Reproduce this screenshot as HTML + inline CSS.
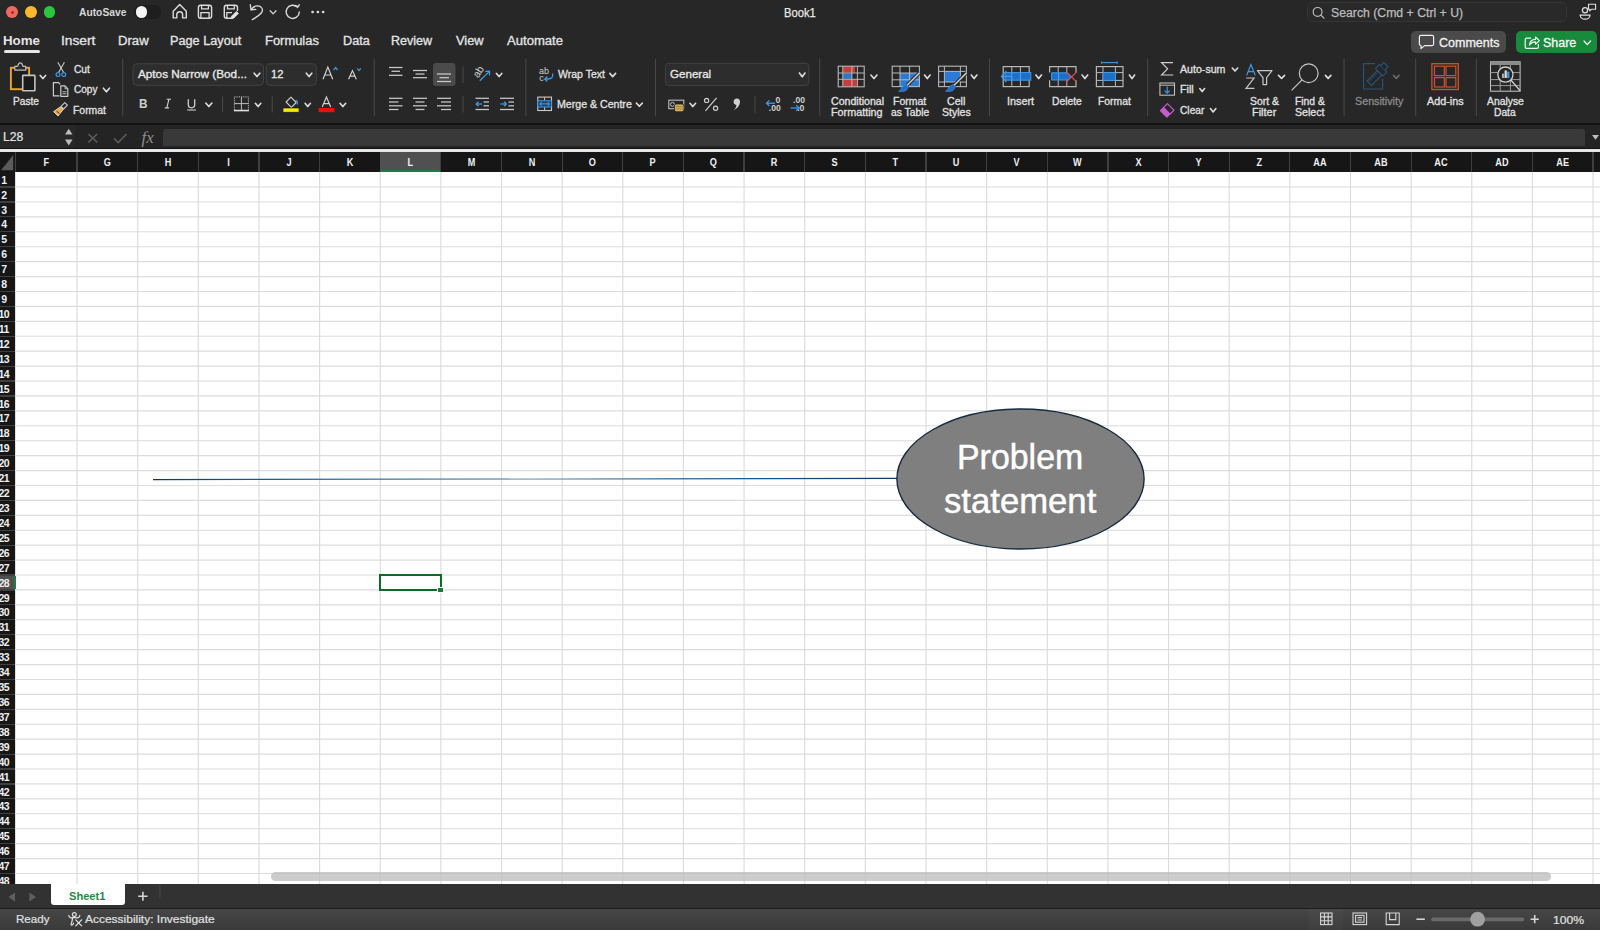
<!DOCTYPE html><html><head><meta charset="utf-8"><style>
*{margin:0;padding:0;box-sizing:border-box}
html,body{width:1600px;height:930px;overflow:hidden;background:#272727;font-family:"Liberation Sans",sans-serif;color:#e6e6e6}
.a{position:absolute}
.t{position:absolute;white-space:nowrap;line-height:1;transform-origin:0 0}
svg{position:absolute;overflow:visible}
</style></head><body>
<div class="a" style="left:0;top:0;width:1600px;height:124px;background:#272727"></div>
<div class="a" style="left:6.1px;top:6.1px;width:11.8px;height:11.8px;border-radius:50%;background:#ee6a5f"></div>
<div class="a" style="left:24.9px;top:6.1px;width:11.8px;height:11.8px;border-radius:50%;background:#f8b82e"></div>
<div class="a" style="left:43.6px;top:6.1px;width:11.8px;height:11.8px;border-radius:50%;background:#2bc640"></div>
<div class="a" style="left:10.5px;top:10.6px;width:3px;height:3px;border-radius:50%;background:#9a2d25"></div>
<div class="a" style="left:134px;top:5px;width:27px;height:14px;border-radius:7px;background:#1e1e1e"></div>
<div class="a" style="left:135.6px;top:6.2px;width:11.8px;height:11.8px;border-radius:50%;background:#f4f4f4"></div>
<div class="a" style="left:1306.8px;top:2.3px;width:260.4px;height:20.2px;border-radius:5px;background:#292929;border:1px solid #353535"></div>
<div class="a" style="left:4.3px;top:50.2px;width:36px;height:2.8px;border-radius:1.5px;background:#e6e6e6"></div>
<div class="a" style="left:1410.7px;top:31px;width:95.7px;height:21.5px;border-radius:5px;background:#4a4a4a"></div>
<div class="a" style="left:1516.1px;top:30.6px;width:81.2px;height:22.3px;border-radius:5px;background:#188a3c"></div>
<svg style="left:0;top:0" width="1600" height="125"><path d="M173.2,11.2 L179.7,4.6 L186.3,11.2 V17.9 H182.6 V14.6 A2.9,2.9 0 0 0 176.8,14.6 V17.9 H173.2 Z" fill="none" stroke="#dcdcdc" stroke-width="1.4" stroke-linejoin="round"/>
<rect x="198.4" y="5.2" width="13.2" height="13" rx="2.2" fill="none" stroke="#dcdcdc" stroke-width="1.4"/>
<path d="M201.6,5.5 V8.8 H208.4 V5.5" fill="none" stroke="#dcdcdc" stroke-width="1.3"/>
<path d="M200.9,18 V12.6 H209.1 V18" fill="none" stroke="#dcdcdc" stroke-width="1.3"/>
<path d="M232.5,18.2 H226.5 A2.2,2.2 0 0 1 224.3,16 V7.4 A2.2,2.2 0 0 1 226.5,5.2 H235.3 A2.2,2.2 0 0 1 237.5,7.4 V11" fill="none" stroke="#dcdcdc" stroke-width="1.4"/>
<path d="M227.5,5.5 V8.8 H234.3 V5.5" fill="none" stroke="#dcdcdc" stroke-width="1.3"/>
<path d="M226.8,18 V12.6 H232" fill="none" stroke="#dcdcdc" stroke-width="1.3"/>
<path d="M231.2,18.6 L231.6,16.2 L236.4,11.4 L238.4,13.4 L233.6,18.2 Z" fill="#e6e6e6" stroke="#e6e6e6" stroke-width="0.8" stroke-linejoin="round"/>
<path d="M251.2,9.6 C254,5.2 259.5,4.6 261.8,8 C263.8,11 261.5,14.5 252.3,19.6" fill="none" stroke="#dcdcdc" stroke-width="1.3" stroke-linecap="round"/>
<polyline points="250.3,4.6 251,9.9 255.8,9.4" fill="none" stroke="#dcdcdc" stroke-width="1.3" stroke-linecap="round" stroke-linejoin="round"/>
<polyline points="270.2,10.8 273.1,13.9 276,10.8" fill="none" stroke="#d0d0d0" stroke-width="1.3" stroke-linecap="round" stroke-linejoin="round"/>
<path d="M297.6,7.4 A6.6,6.6 0 1 0 299.3,12" fill="none" stroke="#dcdcdc" stroke-width="1.4" stroke-linecap="round"/>
<polyline points="294.2,5.6 298.6,6.4 299.2,4.6" fill="none" stroke="#dcdcdc" stroke-width="1.3" stroke-linecap="round" stroke-linejoin="round"/>
<circle cx="312.6" cy="12" r="1.35" fill="#dcdcdc"/>
<circle cx="317.9" cy="12" r="1.35" fill="#dcdcdc"/>
<circle cx="323.1" cy="12" r="1.35" fill="#dcdcdc"/>
<circle cx="1317.6" cy="11.9" r="4.4" fill="none" stroke="#bdbdbd" stroke-width="1.2"/>
<line x1="1320.8" y1="15.1" x2="1324" y2="18.1" stroke="#bdbdbd" stroke-width="1.3" stroke-linecap="round"/>
<circle cx="1585" cy="10.2" r="2.6" fill="none" stroke="#e0e0e0" stroke-width="1.2"/>
<path d="M1580.2,15.2 H1590 A4.9,4 0 0 1 1580.2,15.2 Z" fill="none" stroke="#e0e0e0" stroke-width="1.2"/>
<path d="M1588.5,4.3 H1595.6 V9.2 H1591.6 L1589.8,10.8 V9.2 H1588.5 Z" fill="#262626" stroke="#e0e0e0" stroke-width="1.1" stroke-linejoin="round"/>
<path d="M1421,35.3 H1432 A1.6,1.6 0 0 1 1433.6,36.9 V44 A1.6,1.6 0 0 1 1432,45.6 H1424.6 L1421,48.6 V45.6 H1421 A1.6,1.6 0 0 1 1419.4,44 V36.9 A1.6,1.6 0 0 1 1421,35.3 Z" fill="none" stroke="#f0f0f0" stroke-width="1.2" stroke-linejoin="round"/>
<path d="M1531,38.2 H1526.6 A1.4,1.4 0 0 0 1525.2,39.6 V47 A1.4,1.4 0 0 0 1526.6,48.4 H1537 A1.4,1.4 0 0 0 1538.4,47 V44" fill="none" stroke="#f4f4f4" stroke-width="1.2"/>
<path d="M1529.5,45 C1530,40.5 1532.5,39.4 1535.5,39.4 V37 L1539.4,40.6 L1535.5,44.2 V41.8 C1533,41.8 1531,42.6 1529.5,45 Z" fill="none" stroke="#f4f4f4" stroke-width="1.2" stroke-linejoin="round"/>
<polyline points="1584,41 1587.3,44.6 1590.6,41" fill="none" stroke="#f4f4f4" stroke-width="1.3" stroke-linecap="round" stroke-linejoin="round"/>
<rect x="122.2" y="58.7" width="1.1" height="57.3" fill="#464646"/>
<rect x="373.7" y="58.7" width="1.1" height="57.3" fill="#464646"/>
<rect x="525.3" y="58.7" width="1.1" height="57.3" fill="#464646"/>
<rect x="654.9" y="58.7" width="1.1" height="57.3" fill="#464646"/>
<rect x="819.2" y="58.7" width="1.1" height="57.3" fill="#464646"/>
<rect x="988.9" y="58.7" width="1.1" height="57.3" fill="#464646"/>
<rect x="1147.1" y="58.7" width="1.1" height="57.3" fill="#464646"/>
<rect x="1343.5" y="58.7" width="1.1" height="57.3" fill="#464646"/>
<rect x="1415.1" y="58.7" width="1.1" height="57.3" fill="#464646"/>
<rect x="1475.8" y="58.7" width="1.1" height="57.3" fill="#464646"/>
<rect x="10.9" y="67.8" width="18.2" height="21.4" fill="#1e1e1e" stroke="#eea52f" stroke-width="1.9"/>
<path d="M14.8,70.2 V66.4 H17.6 C18.3,63.6 19.2,62.9 20.3,62.9 C21.4,62.9 22.3,63.6 23,66.4 H25.8 V70.2 Z" fill="#2a2a2a" stroke="#bdbdbd" stroke-width="1.2" stroke-linejoin="round"/>
<rect x="22.7" y="75.4" width="12.2" height="15.4" fill="#1a1a1a" stroke="#c3c3c3" stroke-width="1.6" rx="0.6"/>
<polyline points="40.2,75.4 42.900000000000006,78.6 45.6,75.4" fill="none" stroke="#dedede" stroke-width="1.6" stroke-linecap="round" stroke-linejoin="round"/>
<line x1="57.8" y1="62.2" x2="63.6" y2="72.6" stroke="#cbcbcb" stroke-width="1.1" stroke-linecap="butt"/>
<line x1="64.4" y1="62.2" x2="58.6" y2="72.6" stroke="#cbcbcb" stroke-width="1.1" stroke-linecap="butt"/>
<circle cx="58" cy="74.6" r="1.9" fill="none" stroke="#3d9be9" stroke-width="1.2"/>
<circle cx="63.8" cy="74.6" r="1.9" fill="none" stroke="#3d9be9" stroke-width="1.2"/>
<path d="M59.5,95.8 H53.4 V82.6 H58.5 L60.2,84.3" fill="none" stroke="#cbcbcb" stroke-width="1.2"/>
<path d="M60.8,85.8 H65 L67.8,88.6 V96.3 H60.8 Z" fill="#262626" stroke="#cbcbcb" stroke-width="1.2" stroke-linejoin="round"/>
<path d="M65,86 V88.8 H67.6" fill="none" stroke="#cbcbcb" stroke-width="0.9"/>
<line x1="62.4" y1="91.8" x2="66.4" y2="91.8" stroke="#cbcbcb" stroke-width="0.9" stroke-linecap="butt"/>
<line x1="62.4" y1="93.8" x2="66.4" y2="93.8" stroke="#cbcbcb" stroke-width="0.9" stroke-linecap="butt"/>
<polyline points="103.4,88.2 106.4,91.8 109.4,88.2" fill="none" stroke="#dedede" stroke-width="1.6" stroke-linecap="round" stroke-linejoin="round"/>
<path d="M64.8,102.6 L67.4,105.2 L63.6,109 L61,106.4 Z" fill="#262626" stroke="#cbcbcb" stroke-width="1.1" stroke-linejoin="round"/>
<path d="M60.6,106.8 L63.2,109.4 L58,116 L53.6,111.6 Z" fill="#eaa93a" stroke="#d9d9d9" stroke-width="1" stroke-linejoin="round"/>
<path d="M56.5,111 L59.5,113.5" stroke="#262626" stroke-width="0.9"/>
<rect x="133" y="63.8" width="130.5" height="21.5" rx="4" fill="#2d2d2d" stroke="#434343" stroke-width="1"/>
<polyline points="254.2,73.2 257.0,76.6 259.8,73.2" fill="none" stroke="#dedede" stroke-width="1.6" stroke-linecap="round" stroke-linejoin="round"/>
<rect x="266.3" y="63.8" width="50" height="21.5" rx="4" fill="#2d2d2d" stroke="#434343" stroke-width="1"/>
<polyline points="306.3,73.2 309.05,76.6 311.8,73.2" fill="none" stroke="#dedede" stroke-width="1.6" stroke-linecap="round" stroke-linejoin="round"/>
<path d="M323,79.2 L327.85,67 L332.7,79.2 M324.7,75 H331" fill="none" stroke="#d2d2d2" stroke-width="1.2"/>
<polyline points="333.6,70.2 335.6,67.6 337.6,70.2" fill="none" stroke="#3d9be9" stroke-width="1.2"/>
<path d="M348.6,79.2 L352.45,70.6 L356.3,79.2 M349.9,76.2 H355" fill="none" stroke="#d2d2d2" stroke-width="1.2"/>
<polyline points="357.2,68.3 359,70.6 360.8,68.3" fill="none" stroke="#3d9be9" stroke-width="1.2"/>
<path d="M166.6,99.3 H171 M168.9,99.3 L166.8,107.9 M164.8,107.9 H169.1" fill="none" stroke="#cfcfcf" stroke-width="1.1"/>
<path d="M188.3,99.2 V104.6 A3.2,3.2 0 0 0 194.7,104.6 V99.2" fill="none" stroke="#cfcfcf" stroke-width="1.3"/>
<line x1="187.2" y1="110" x2="196" y2="110" stroke="#cfcfcf" stroke-width="1.1" stroke-linecap="butt"/>
<polyline points="205.8,103 208.85000000000002,106.6 211.9,103" fill="none" stroke="#dedede" stroke-width="1.6" stroke-linecap="round" stroke-linejoin="round"/>
<rect x="222.0" y="96.4" width="1.1" height="15.899999999999991" fill="#464646"/>
<rect x="234.4" y="96.9" width="14" height="13.4" fill="none" stroke="#bdbdbd" stroke-width="1" stroke-dasharray="1.2,1"/>
<line x1="241.4" y1="97" x2="241.4" y2="110" stroke="#bdbdbd" stroke-width="1" stroke-linecap="butt"/>
<line x1="234.4" y1="103.6" x2="248.4" y2="103.6" stroke="#bdbdbd" stroke-width="1" stroke-linecap="butt"/>
<line x1="233.9" y1="110.6" x2="248.9" y2="110.6" stroke="#e0e0e0" stroke-width="1.5" stroke-linecap="butt"/>
<polyline points="255.4,103.3 258.1,106.6 260.8,103.3" fill="none" stroke="#dedede" stroke-width="1.6" stroke-linecap="round" stroke-linejoin="round"/>
<rect x="271.7" y="96.5" width="1.1" height="16.0" fill="#464646"/>
<path d="M286.1,102 L290.9,97.2 L296.2,102.5 L291.4,107.3 Z" fill="none" stroke="#cfcfcf" stroke-width="1.1" stroke-linejoin="round"/>
<path d="M295.5,101 C296.8,99.8 297.6,101.2 297.3,104.5" fill="none" stroke="#3d9be9" stroke-width="1.2"/>
<rect x="283" y="108" width="16" height="4.2" fill="#f5ea00" stroke="#101035" stroke-width="0.6"/>
<polyline points="305.1,103.3 307.75,106.6 310.4,103.3" fill="none" stroke="#dedede" stroke-width="1.6" stroke-linecap="round" stroke-linejoin="round"/>
<path d="M322.2,107 L326.45,97 L330.7,107 M323.6,103.6 H329.3" fill="none" stroke="#d2d2d2" stroke-width="1.2"/>
<rect x="318.6" y="108" width="15.8" height="4.2" fill="#e8120c"/>
<polyline points="340,103.3 342.85,106.6 345.7,103.3" fill="none" stroke="#dedede" stroke-width="1.6" stroke-linecap="round" stroke-linejoin="round"/>
<line x1="389" y1="67.5" x2="402.5" y2="67.5" stroke="#c9c9c9" stroke-width="1.25" stroke-linecap="butt"/>
<line x1="391.5" y1="71.3" x2="400" y2="71.3" stroke="#c9c9c9" stroke-width="1.25" stroke-linecap="butt"/>
<line x1="389" y1="75.3" x2="402.5" y2="75.3" stroke="#c9c9c9" stroke-width="1.25" stroke-linecap="butt"/>
<line x1="413" y1="70.5" x2="427" y2="70.5" stroke="#c9c9c9" stroke-width="1.25" stroke-linecap="butt"/>
<line x1="415.5" y1="74" x2="424.5" y2="74" stroke="#c9c9c9" stroke-width="1.25" stroke-linecap="butt"/>
<line x1="413" y1="77.7" x2="427" y2="77.7" stroke="#c9c9c9" stroke-width="1.25" stroke-linecap="butt"/>
<rect x="433" y="63" width="22.5" height="23" rx="3" fill="#4b4b4b"/>
<line x1="437" y1="74" x2="451" y2="74" stroke="#c9c9c9" stroke-width="1.25" stroke-linecap="butt"/>
<line x1="439.5" y1="77.7" x2="449" y2="77.7" stroke="#c9c9c9" stroke-width="1.25" stroke-linecap="butt"/>
<line x1="437" y1="81.5" x2="451" y2="81.5" stroke="#c9c9c9" stroke-width="1.25" stroke-linecap="butt"/>
<rect x="462.5" y="66.5" width="1.1" height="16.5" fill="#464646"/>
<rect x="462.5" y="96" width="1.1" height="16.5" fill="#464646"/>
<text x="0" y="0" transform="translate(478.2,78.6) rotate(-58)" font-family="Liberation Sans" font-size="10.5" fill="#cfcfcf">ab</text>
<line x1="479.8" y1="80.8" x2="489.4" y2="71.4" stroke="#3d9be9" stroke-width="1.2" stroke-linecap="butt"/>
<polyline points="485.2,71.3 489.6,71.2 489.5,75.6" fill="none" stroke="#3d9be9" stroke-width="1.2"/>
<polyline points="496.4,73.4 499.1,76.6 501.8,73.4" fill="none" stroke="#dedede" stroke-width="1.6" stroke-linecap="round" stroke-linejoin="round"/>
<line x1="389" y1="98.3" x2="402.5" y2="98.3" stroke="#c9c9c9" stroke-width="1.25" stroke-linecap="butt"/>
<line x1="389" y1="102" x2="398.5" y2="102" stroke="#c9c9c9" stroke-width="1.25" stroke-linecap="butt"/>
<line x1="389" y1="105.8" x2="402.5" y2="105.8" stroke="#c9c9c9" stroke-width="1.25" stroke-linecap="butt"/>
<line x1="389" y1="109.5" x2="398.5" y2="109.5" stroke="#c9c9c9" stroke-width="1.25" stroke-linecap="butt"/>
<line x1="413" y1="98.3" x2="427" y2="98.3" stroke="#c9c9c9" stroke-width="1.25" stroke-linecap="butt"/>
<line x1="415.5" y1="102" x2="424.5" y2="102" stroke="#c9c9c9" stroke-width="1.25" stroke-linecap="butt"/>
<line x1="413" y1="105.8" x2="427" y2="105.8" stroke="#c9c9c9" stroke-width="1.25" stroke-linecap="butt"/>
<line x1="415.5" y1="109.5" x2="424.5" y2="109.5" stroke="#c9c9c9" stroke-width="1.25" stroke-linecap="butt"/>
<line x1="437" y1="98.3" x2="451" y2="98.3" stroke="#c9c9c9" stroke-width="1.25" stroke-linecap="butt"/>
<line x1="441" y1="102" x2="451" y2="102" stroke="#c9c9c9" stroke-width="1.25" stroke-linecap="butt"/>
<line x1="437" y1="105.8" x2="451" y2="105.8" stroke="#c9c9c9" stroke-width="1.25" stroke-linecap="butt"/>
<line x1="441" y1="109.5" x2="451" y2="109.5" stroke="#c9c9c9" stroke-width="1.25" stroke-linecap="butt"/>
<line x1="475.5" y1="98.3" x2="489" y2="98.3" stroke="#c9c9c9" stroke-width="1.25" stroke-linecap="butt"/>
<line x1="483.5" y1="102" x2="489" y2="102" stroke="#c9c9c9" stroke-width="1.25" stroke-linecap="butt"/>
<line x1="483.5" y1="105.8" x2="489" y2="105.8" stroke="#c9c9c9" stroke-width="1.25" stroke-linecap="butt"/>
<line x1="475.5" y1="109.5" x2="489" y2="109.5" stroke="#c9c9c9" stroke-width="1.25" stroke-linecap="butt"/>
<line x1="476.5" y1="104" x2="482" y2="104" stroke="#3d9be9" stroke-width="1.3" stroke-linecap="butt"/>
<polyline points="478.5,101.8 476.2,104 478.5,106.2" fill="none" stroke="#3d9be9" stroke-width="1.3"/>
<line x1="500" y1="98.3" x2="514" y2="98.3" stroke="#c9c9c9" stroke-width="1.25" stroke-linecap="butt"/>
<line x1="508.5" y1="102" x2="514" y2="102" stroke="#c9c9c9" stroke-width="1.25" stroke-linecap="butt"/>
<line x1="508.5" y1="105.8" x2="514" y2="105.8" stroke="#c9c9c9" stroke-width="1.25" stroke-linecap="butt"/>
<line x1="500" y1="109.5" x2="514" y2="109.5" stroke="#c9c9c9" stroke-width="1.25" stroke-linecap="butt"/>
<line x1="500.5" y1="104" x2="506" y2="104" stroke="#3d9be9" stroke-width="1.3" stroke-linecap="butt"/>
<polyline points="504,101.8 506.3,104 504,106.2" fill="none" stroke="#3d9be9" stroke-width="1.3"/>
<text x="539" y="73.6" font-family="Liberation Sans" font-size="9" fill="#cfcfcf">ab</text>
<text x="539.3" y="81.4" font-family="Liberation Sans" font-size="9" fill="#cfcfcf">c</text>
<path d="M552.6,73.5 C553.4,77.6 551.2,79 548,79 H545" fill="none" stroke="#3d9be9" stroke-width="1.3"/>
<polyline points="547.4,76.6 544.8,79 547.4,81.4" fill="none" stroke="#3d9be9" stroke-width="1.3"/>
<polyline points="609.8,73.4 612.7,76.6 615.6,73.4" fill="none" stroke="#dedede" stroke-width="1.6" stroke-linecap="round" stroke-linejoin="round"/>
<rect x="537.8" y="97.1" width="13.7" height="13.4" fill="none" stroke="#cbcbcb" stroke-width="1.1"/>
<line x1="544.6" y1="97.2" x2="544.6" y2="100.6" stroke="#cbcbcb" stroke-width="1" stroke-linecap="butt"/>
<line x1="544.6" y1="107.2" x2="544.6" y2="110.4" stroke="#cbcbcb" stroke-width="1" stroke-linecap="butt"/>
<rect x="537.8" y="100.8" width="13.7" height="6.2" fill="#1e3d5c" stroke="#3d9be9" stroke-width="1.1"/>
<line x1="540" y1="103.9" x2="549.4" y2="103.9" stroke="#3d9be9" stroke-width="1.2" stroke-linecap="butt"/>
<polyline points="541.6,102.2 539.9,103.9 541.6,105.6" fill="none" stroke="#3d9be9" stroke-width="1.1"/>
<polyline points="547.8,102.2 549.5,103.9 547.8,105.6" fill="none" stroke="#3d9be9" stroke-width="1.1"/>
<polyline points="636.4,103.1 639.3499999999999,106.3 642.3,103.1" fill="none" stroke="#dedede" stroke-width="1.6" stroke-linecap="round" stroke-linejoin="round"/>
<rect x="665.4" y="63.3" width="143.5" height="22.3" rx="4" fill="#2d2d2d" stroke="#434343" stroke-width="1"/>
<polyline points="799.4,73 802.2,76.8 805,73" fill="none" stroke="#dedede" stroke-width="1.6" stroke-linecap="round" stroke-linejoin="round"/>
<rect x="668.8" y="100.2" width="15" height="8.5" fill="none" stroke="#bdbdbd" stroke-width="1.1"/>
<circle cx="672.5" cy="104.4" r="2" fill="none" stroke="#bdbdbd" stroke-width="1"/>
<rect x="674.4" y="104" width="9.6" height="7.8" rx="2" fill="#d6b060" stroke="#1c1c1c" stroke-width="0.8"/>
<path d="M675.5,106.6 H683 M675.5,109 H683" stroke="#7a6030" stroke-width="0.6"/>
<polyline points="690,103.3 692.8,106.6 695.6,103.3" fill="none" stroke="#dedede" stroke-width="1.6" stroke-linecap="round" stroke-linejoin="round"/>
<circle cx="706.6" cy="100.4" r="2.1" fill="none" stroke="#cfcfcf" stroke-width="1.2"/><circle cx="715.6" cy="108.3" r="2.1" fill="none" stroke="#cfcfcf" stroke-width="1.2"/>
<line x1="716.6" y1="97.8" x2="705.4" y2="110.8" stroke="#cfcfcf" stroke-width="1.2" stroke-linecap="butt"/>
<path d="M736.7,98.6 C739.3,98.6 740.3,100.6 740,102.6 C739.6,105.8 737.4,108.6 733.4,110.2 C735.6,108.4 736.4,106.8 736.3,104.9 C734.6,104.8 733.6,103.6 733.6,101.8 C733.6,99.9 735,98.6 736.7,98.6 Z" fill="#cfcfcf"/>
<rect x="754.4" y="96.4" width="1.1" height="16.5" fill="#464646"/>
<path d="M766.6,103.2 H775" stroke="#3d9be9" stroke-width="1.3"/><polyline points="769.4,100.4 766.5,103.2 769.4,106" fill="none" stroke="#3d9be9" stroke-width="1.3"/>
<text x="775.6" y="103.2" font-family="Liberation Sans" font-weight="bold" font-size="8.6" fill="#d0d0d0">0</text>
<text x="768.8" y="111" font-family="Liberation Sans" font-weight="bold" font-size="8.6" fill="#d0d0d0">.00</text>
<text x="793" y="103.2" font-family="Liberation Sans" font-weight="bold" font-size="8.6" fill="#d0d0d0">.00</text>
<path d="M790.6,108 H799" stroke="#3d9be9" stroke-width="1.3"/><polyline points="796.2,105.2 799.1,108 796.2,110.8" fill="none" stroke="#3d9be9" stroke-width="1.3"/>
<text x="797.2" y="111" font-family="Liberation Sans" font-weight="bold" font-size="8.6" fill="#d0d0d0">.0</text>
<rect x="842.8" y="66.3" width="12.4" height="6.3" fill="#c83c3c"/>
<rect x="842.8" y="73.5" width="9.2" height="5.4" fill="#2a78cc"/>
<rect x="842.8" y="79.6" width="14" height="7" fill="#c83c3c"/>
<rect x="838.2" y="66.2" width="26" height="20.6" fill="none" stroke="#b8b8b8" stroke-width="1.1"/>
<line x1="842.8" y1="66.2" x2="842.8" y2="86.8" stroke="#b8b8b8" stroke-width="1" stroke-linecap="butt"/>
<line x1="851.9" y1="66.2" x2="851.9" y2="86.8" stroke="#b8b8b8" stroke-width="1" stroke-linecap="butt"/>
<line x1="857.4" y1="66.2" x2="857.4" y2="86.8" stroke="#b8b8b8" stroke-width="1" stroke-linecap="butt"/>
<line x1="838.2" y1="73" x2="864.2" y2="73" stroke="#b8b8b8" stroke-width="1" stroke-linecap="butt"/>
<line x1="838.2" y1="79.3" x2="864.2" y2="79.3" stroke="#b8b8b8" stroke-width="1" stroke-linecap="butt"/>
<polyline points="870.9,75 873.95,78.6 877,75" fill="none" stroke="#dedede" stroke-width="1.6" stroke-linecap="round" stroke-linejoin="round"/>
<rect x="900" y="73" width="19.4" height="13.6" fill="#2a7ad6"/>
<rect x="892.2" y="66.2" width="27.2" height="20.4" fill="none" stroke="#b8b8b8" stroke-width="1.1"/>
<line x1="900" y1="66.2" x2="900" y2="86.6" stroke="#b8b8b8" stroke-width="1" stroke-linecap="butt"/>
<line x1="909.6" y1="66.2" x2="909.6" y2="86.6" stroke="#b8b8b8" stroke-width="1" stroke-linecap="butt"/>
<line x1="892.2" y1="73" x2="919.4" y2="73" stroke="#b8b8b8" stroke-width="1" stroke-linecap="butt"/>
<line x1="892.2" y1="79.8" x2="919.4" y2="79.8" stroke="#b8b8b8" stroke-width="1" stroke-linecap="butt"/>
<path d="M919.8,72.6 L906.2,86.2" stroke="#262626" stroke-width="3.6"/><path d="M919.8,72.6 L906.6,85.8" stroke="#c8c8c8" stroke-width="1.6"/>
<path d="M906.2,84.6 C908.4,85.4 908.6,88.6 906,90.4 C903.8,91.8 900.6,91.6 898.6,91.2 C901.4,89.8 901.6,85.6 906.2,84.6 Z" fill="#1f6fc9" stroke="#3d9be9" stroke-width="0.6"/>
<polyline points="924.5,75 927.3,78.6 930.1,75" fill="none" stroke="#dedede" stroke-width="1.6" stroke-linecap="round" stroke-linejoin="round"/>
<rect x="944.6" y="71.6" width="15.6" height="10.4" fill="#2a7ad6"/>
<rect x="938.6" y="66.2" width="27.8" height="20.4" fill="none" stroke="#b8b8b8" stroke-width="1.1"/>
<line x1="944.4" y1="66.2" x2="944.4" y2="86.6" stroke="#b8b8b8" stroke-width="1" stroke-linecap="butt"/>
<line x1="960.4" y1="66.2" x2="960.4" y2="86.6" stroke="#b8b8b8" stroke-width="1" stroke-linecap="butt"/>
<line x1="938.6" y1="71.4" x2="966.4" y2="71.4" stroke="#b8b8b8" stroke-width="1" stroke-linecap="butt"/>
<line x1="938.6" y1="82" x2="966.4" y2="82" stroke="#b8b8b8" stroke-width="1" stroke-linecap="butt"/>
<path d="M966.8,72.6 L953.2,86.2" stroke="#262626" stroke-width="3.6"/><path d="M966.8,72.6 L953.6,85.8" stroke="#c8c8c8" stroke-width="1.6"/>
<path d="M953.2,84.6 C955.4,85.4 955.6,88.6 953,90.4 C950.8,91.8 947.6,91.6 945.6,91.2 C948.4,89.8 948.6,85.6 953.2,84.6 Z" fill="#1f6fc9" stroke="#3d9be9" stroke-width="0.6"/>
<polyline points="971.3,75 974.0999999999999,78.6 976.9,75" fill="none" stroke="#dedede" stroke-width="1.6" stroke-linecap="round" stroke-linejoin="round"/>
<rect x="1003.2" y="66.6" width="26" height="20" fill="none" stroke="#b8b8b8" stroke-width="1.2"/>
<line x1="1011.8" y1="66.6" x2="1011.8" y2="86.6" stroke="#b8b8b8" stroke-width="1" stroke-linecap="butt"/>
<line x1="1020.4" y1="66.6" x2="1020.4" y2="86.6" stroke="#b8b8b8" stroke-width="1" stroke-linecap="butt"/>
<rect x="1005" y="72.6" width="25.8" height="7.6" fill="#1f6fc9" stroke="#3d9be9" stroke-width="1"/>
<line x1="1011.8" y1="72.6" x2="1011.8" y2="80.2" stroke="#5aaaf0" stroke-width="0.9" stroke-linecap="butt"/>
<line x1="1020.4" y1="72.6" x2="1020.4" y2="80.2" stroke="#5aaaf0" stroke-width="0.9" stroke-linecap="butt"/>
<path d="M1002,76.4 H1012" stroke="#3d9be9" stroke-width="1.2"/><polyline points="1006.4,70.8 1001.4,76.4 1006.4,82" fill="none" stroke="#3d9be9" stroke-width="1.2"/>
<polyline points="1035.9,75 1038.7,78.6 1041.5,75" fill="none" stroke="#dedede" stroke-width="1.6" stroke-linecap="round" stroke-linejoin="round"/>
<path d="M1049.6,72.6 V66.6 H1076 V72.6 M1049.6,80.2 V86.6 H1076 V80.2" fill="none" stroke="#b8b8b8" stroke-width="1.2"/>
<line x1="1058.2" y1="66.6" x2="1058.2" y2="72.6" stroke="#b8b8b8" stroke-width="1" stroke-linecap="butt"/>
<line x1="1058.2" y1="80.2" x2="1058.2" y2="86.6" stroke="#b8b8b8" stroke-width="1" stroke-linecap="butt"/>
<line x1="1066.8" y1="66.6" x2="1066.8" y2="72.6" stroke="#b8b8b8" stroke-width="1" stroke-linecap="butt"/>
<line x1="1066.8" y1="80.2" x2="1066.8" y2="86.6" stroke="#b8b8b8" stroke-width="1" stroke-linecap="butt"/>
<path d="M1051.6,72.8 H1067.6 L1071,76.4 L1067.6,80 H1051.6 Z" fill="#1f6fc9" stroke="#3d9be9" stroke-width="1"/>
<line x1="1058.6" y1="72.8" x2="1058.6" y2="80" stroke="#5aaaf0" stroke-width="0.9" stroke-linecap="butt"/>
<line x1="1066.2" y1="71.6" x2="1076.8" y2="82.2" stroke="#e05050" stroke-width="1.2" stroke-linecap="butt"/>
<line x1="1076.8" y1="71.6" x2="1066.2" y2="82.2" stroke="#e05050" stroke-width="1.2" stroke-linecap="butt"/>
<polyline points="1082.1,75 1084.9,78.6 1087.7,75" fill="none" stroke="#dedede" stroke-width="1.6" stroke-linecap="round" stroke-linejoin="round"/>
<rect x="1096.4" y="66.6" width="26.6" height="20" fill="none" stroke="#b8b8b8" stroke-width="1.2"/>
<line x1="1103" y1="66.6" x2="1103" y2="86.6" stroke="#b8b8b8" stroke-width="1" stroke-linecap="butt"/>
<line x1="1115.4" y1="66.6" x2="1115.4" y2="86.6" stroke="#b8b8b8" stroke-width="1" stroke-linecap="butt"/>
<line x1="1096.4" y1="72.6" x2="1123" y2="72.6" stroke="#b8b8b8" stroke-width="1" stroke-linecap="butt"/>
<line x1="1096.4" y1="80.4" x2="1123" y2="80.4" stroke="#b8b8b8" stroke-width="1" stroke-linecap="butt"/>
<rect x="1103" y="72.6" width="12.4" height="7.8" fill="#1f6fc9" stroke="#3d9be9" stroke-width="0.9"/>
<line x1="1101.4" y1="62.6" x2="1117.2" y2="62.6" stroke="#3d9be9" stroke-width="1.1" stroke-linecap="butt"/>
<line x1="1101.4" y1="61.4" x2="1101.4" y2="63.8" stroke="#3d9be9" stroke-width="1" stroke-linecap="butt"/>
<line x1="1117.2" y1="61.4" x2="1117.2" y2="63.8" stroke="#3d9be9" stroke-width="1" stroke-linecap="butt"/>
<polyline points="1129.4,75 1132.0,78.6 1134.6,75" fill="none" stroke="#dedede" stroke-width="1.6" stroke-linecap="round" stroke-linejoin="round"/>
<path d="M1173,62.6 H1161.6 L1167.6,68.8 L1161.6,75 H1173.2" fill="none" stroke="#cfcfcf" stroke-width="1.2" stroke-linejoin="miter"/>
<polyline points="1232.3,68 1235.0,71 1237.7,68" fill="none" stroke="#dedede" stroke-width="1.6" stroke-linecap="round" stroke-linejoin="round"/>
<rect x="1159.9" y="83" width="14.6" height="12.2" fill="none" stroke="#bdbdbd" stroke-width="1.1"/>
<line x1="1159.9" y1="85.2" x2="1174.5" y2="85.2" stroke="#bdbdbd" stroke-width="1" stroke-linecap="butt"/>
<path d="M1167.2,86.6 V93" stroke="#3d9be9" stroke-width="1.2"/><polyline points="1164.6,90.6 1167.2,93.2 1169.8,90.6" fill="none" stroke="#3d9be9" stroke-width="1.2"/>
<polyline points="1199.8,88.6 1202.1999999999998,91.6 1204.6,88.6" fill="none" stroke="#dedede" stroke-width="1.6" stroke-linecap="round" stroke-linejoin="round"/>
<path d="M1167.4,103.6 L1174,110.2 L1166.8,117 L1160.4,110.6 Z" fill="none" stroke="#c45ccc" stroke-width="1.2" stroke-linejoin="round"/>
<path d="M1163.9,107.1 L1170.5,113.7 L1166.8,117 L1160.4,110.6 Z" fill="#c45ccc"/>
<polyline points="1210.4,108.6 1213.15,112 1215.9,108.6" fill="none" stroke="#dedede" stroke-width="1.6" stroke-linecap="round" stroke-linejoin="round"/>
<path d="M1246.6,75.4 L1250.95,64.6 L1255.3,75.4 M1248.1,71.6 H1253.8" fill="none" stroke="#3d9be9" stroke-width="1.2"/>
<path d="M1246.2,78 H1254 L1246,88.4 H1254.4" fill="none" stroke="#c8c8c8" stroke-width="1.2"/>
<path d="M1257.4,70.6 H1272 L1266.6,77.6 V84.6 H1263 V77.6 Z" fill="none" stroke="#c8c8c8" stroke-width="1.2" stroke-linejoin="round"/>
<polyline points="1278.5,75.4 1281.55,78.4 1284.6,75.4" fill="none" stroke="#dedede" stroke-width="1.6" stroke-linecap="round" stroke-linejoin="round"/>
<circle cx="1308.7" cy="73.2" r="9.4" fill="none" stroke="#c8c8c8" stroke-width="1.2"/>
<line x1="1302" y1="79.8" x2="1291.6" y2="90.3" stroke="#c8c8c8" stroke-width="1.2" stroke-linecap="butt"/>
<polyline points="1325.4,75.4 1328.15,78.4 1330.9,75.4" fill="none" stroke="#dedede" stroke-width="1.6" stroke-linecap="round" stroke-linejoin="round"/>
<path d="M1375,63.6 H1363.6 V89 H1382.6 V79" fill="none" stroke="#2a5274" stroke-width="1.2"/>
<path d="M1367,81 L1377.4,70.6 L1381.8,75 L1371.4,85.4 Z" fill="#262626" stroke="#2a5274" stroke-width="1.2"/>
<path d="M1369,81.4 L1377.6,72.8" stroke="#2a5274" stroke-width="1"/>
<path d="M1375.4,68.6 L1379.4,64.6 L1386.8,72 L1382.8,76 Z" fill="#262626" stroke="#2a5274" stroke-width="1.2"/>
<path d="M1380.6,65.8 L1383.8,62.6 L1388,66.8 L1384.8,70" fill="#262626" stroke="#2a5274" stroke-width="1.2"/>
<polyline points="1393.5,75.4 1396.25,78.4 1399,75.4" fill="none" stroke="#6a6a6a" stroke-width="1.6" stroke-linecap="round" stroke-linejoin="round"/>
<rect x="1431.9" y="63.7" width="26.4" height="25.8" fill="none" stroke="#d4502c" stroke-width="1.3"/>
<rect x="1434.5" y="66.2" width="9.8" height="9.4" fill="none" stroke="#d4502c" stroke-width="1.2"/>
<rect x="1446" y="66.2" width="9.8" height="9.4" fill="none" stroke="#d4502c" stroke-width="1.2"/>
<rect x="1434.5" y="77.6" width="9.8" height="9.4" fill="none" stroke="#d4502c" stroke-width="1.2"/>
<rect x="1446" y="77.6" width="9.8" height="9.4" fill="none" stroke="#d4502c" stroke-width="1.2"/>
<rect x="1490.5" y="61.8" width="29.6" height="29.4" fill="none" stroke="#bdbdbd" stroke-width="1.1"/>
<rect x="1490.5" y="61.8" width="29.6" height="3.2" fill="#8a8a8a"/>
<line x1="1500.2" y1="65" x2="1500.2" y2="91.2" stroke="#9a9a9a" stroke-width="1" stroke-linecap="butt"/>
<line x1="1510.4" y1="65" x2="1510.4" y2="91.2" stroke="#9a9a9a" stroke-width="1" stroke-linecap="butt"/>
<line x1="1490.5" y1="72.6" x2="1520.1" y2="72.6" stroke="#9a9a9a" stroke-width="1" stroke-linecap="butt"/>
<line x1="1490.5" y1="79.6" x2="1520.1" y2="79.6" stroke="#9a9a9a" stroke-width="1" stroke-linecap="butt"/>
<line x1="1490.5" y1="85.6" x2="1520.1" y2="85.6" stroke="#9a9a9a" stroke-width="1" stroke-linecap="butt"/>
<circle cx="1505.4" cy="74.6" r="7.6" fill="#262626" stroke="#cfcfcf" stroke-width="1.3"/>
<rect x="1502" y="73.6" width="2.2" height="4.4" fill="#aaaaaa"/><rect x="1504.6" y="70.4" width="2.2" height="7.6" fill="#dddddd"/><rect x="1507.2" y="71.6" width="2.2" height="6.4" fill="#3d9be9"/>
<line x1="1510.8" y1="80" x2="1520.2" y2="90.8" stroke="#cfcfcf" stroke-width="1.3" stroke-linecap="butt"/></svg>
<div class="a" style="left:0;top:123.3px;width:1600px;height:1.8px;background:#111"></div>
<div class="a" style="left:0;top:125px;width:1600px;height:25px;background:#242424"></div>
<div class="a" style="left:0;top:125px;width:75px;height:25px;background:#282828"></div>
<div class="a" style="left:162.5px;top:128.8px;width:1422px;height:17px;border-radius:3px 3px 0 0;background:#393939"></div><div class="a" style="left:0;top:148.1px;width:1600px;height:1px;background:#111"></div>
<svg style="left:0;top:0" width="1600" height="152">
<polygon points="65,134.4 68.75,128.8 72.5,134.4" fill="#bdbdbd"/>
<polygon points="65,139.4 68.75,145.6 72.5,139.4" fill="#bdbdbd"/>
<path d="M88.4,134 L97.2,142.4 M97.2,134 L88.4,142.4" stroke="#5c5c5c" stroke-width="1.5"/>
<polyline points="114,138.4 118.2,142.6 126.6,134" fill="none" stroke="#5c5c5c" stroke-width="1.5"/>
<polygon points="1592,135 1599,135 1595.5,139.7" fill="#bdbdbd"/>
</svg>
<div class="t" style="left:141.5px;top:128.6px;font-family:'Liberation Serif';font-style:italic;font-size:17px;color:#8e8e8e">fx</div>
<div class="a" style="left:0;top:149.1px;width:1600px;height:2.8px;background:#e6e6e6"></div>
<div class="a" style="left:0;top:151.8px;width:1600px;height:20px;background:#161616"></div>
<div class="t" style="left:16.40px;top:157px;width:60.64px;text-align:center;font-size:11px;font-weight:bold;color:#f0f0f0"><span style="display:inline-block;transform:scaleX(0.83)">F</span></div>
<div class="a" style="left:76.44px;top:152px;width:1.2px;height:20px;background:#3f3f3f"></div>
<div class="t" style="left:77.04px;top:157px;width:60.64px;text-align:center;font-size:11px;font-weight:bold;color:#f0f0f0"><span style="display:inline-block;transform:scaleX(0.83)">G</span></div>
<div class="a" style="left:137.08px;top:152px;width:1.2px;height:20px;background:#3f3f3f"></div>
<div class="t" style="left:137.68px;top:157px;width:60.64px;text-align:center;font-size:11px;font-weight:bold;color:#f0f0f0"><span style="display:inline-block;transform:scaleX(0.83)">H</span></div>
<div class="a" style="left:197.72px;top:152px;width:1.2px;height:20px;background:#3f3f3f"></div>
<div class="t" style="left:198.32px;top:157px;width:60.64px;text-align:center;font-size:11px;font-weight:bold;color:#f0f0f0"><span style="display:inline-block;transform:scaleX(0.83)">I</span></div>
<div class="a" style="left:258.36px;top:152px;width:1.2px;height:20px;background:#3f3f3f"></div>
<div class="t" style="left:258.96px;top:157px;width:60.64px;text-align:center;font-size:11px;font-weight:bold;color:#f0f0f0"><span style="display:inline-block;transform:scaleX(0.83)">J</span></div>
<div class="a" style="left:319.00px;top:152px;width:1.2px;height:20px;background:#3f3f3f"></div>
<div class="t" style="left:319.60px;top:157px;width:60.64px;text-align:center;font-size:11px;font-weight:bold;color:#f0f0f0"><span style="display:inline-block;transform:scaleX(0.83)">K</span></div>
<div class="a" style="left:379.64px;top:152px;width:1.2px;height:20px;background:#3f3f3f"></div>
<div class="a" style="left:380.24px;top:152px;width:60.64px;height:20px;background:#505050"></div>
<div class="a" style="left:380.24px;top:170.2px;width:60.64px;height:1.8px;background:#1e7d45"></div>
<div class="t" style="left:380.24px;top:157px;width:60.64px;text-align:center;font-size:11px;font-weight:bold;color:#f0f0f0"><span style="display:inline-block;transform:scaleX(0.83)">L</span></div>
<div class="a" style="left:440.28px;top:152px;width:1.2px;height:20px;background:#3f3f3f"></div>
<div class="t" style="left:440.88px;top:157px;width:60.64px;text-align:center;font-size:11px;font-weight:bold;color:#f0f0f0"><span style="display:inline-block;transform:scaleX(0.83)">M</span></div>
<div class="a" style="left:500.92px;top:152px;width:1.2px;height:20px;background:#3f3f3f"></div>
<div class="t" style="left:501.52px;top:157px;width:60.64px;text-align:center;font-size:11px;font-weight:bold;color:#f0f0f0"><span style="display:inline-block;transform:scaleX(0.83)">N</span></div>
<div class="a" style="left:561.56px;top:152px;width:1.2px;height:20px;background:#3f3f3f"></div>
<div class="t" style="left:562.16px;top:157px;width:60.64px;text-align:center;font-size:11px;font-weight:bold;color:#f0f0f0"><span style="display:inline-block;transform:scaleX(0.83)">O</span></div>
<div class="a" style="left:622.20px;top:152px;width:1.2px;height:20px;background:#3f3f3f"></div>
<div class="t" style="left:622.80px;top:157px;width:60.64px;text-align:center;font-size:11px;font-weight:bold;color:#f0f0f0"><span style="display:inline-block;transform:scaleX(0.83)">P</span></div>
<div class="a" style="left:682.84px;top:152px;width:1.2px;height:20px;background:#3f3f3f"></div>
<div class="t" style="left:683.44px;top:157px;width:60.64px;text-align:center;font-size:11px;font-weight:bold;color:#f0f0f0"><span style="display:inline-block;transform:scaleX(0.83)">Q</span></div>
<div class="a" style="left:743.48px;top:152px;width:1.2px;height:20px;background:#3f3f3f"></div>
<div class="t" style="left:744.08px;top:157px;width:60.64px;text-align:center;font-size:11px;font-weight:bold;color:#f0f0f0"><span style="display:inline-block;transform:scaleX(0.83)">R</span></div>
<div class="a" style="left:804.12px;top:152px;width:1.2px;height:20px;background:#3f3f3f"></div>
<div class="t" style="left:804.72px;top:157px;width:60.64px;text-align:center;font-size:11px;font-weight:bold;color:#f0f0f0"><span style="display:inline-block;transform:scaleX(0.83)">S</span></div>
<div class="a" style="left:864.76px;top:152px;width:1.2px;height:20px;background:#3f3f3f"></div>
<div class="t" style="left:865.36px;top:157px;width:60.64px;text-align:center;font-size:11px;font-weight:bold;color:#f0f0f0"><span style="display:inline-block;transform:scaleX(0.83)">T</span></div>
<div class="a" style="left:925.40px;top:152px;width:1.2px;height:20px;background:#3f3f3f"></div>
<div class="t" style="left:926.00px;top:157px;width:60.64px;text-align:center;font-size:11px;font-weight:bold;color:#f0f0f0"><span style="display:inline-block;transform:scaleX(0.83)">U</span></div>
<div class="a" style="left:986.04px;top:152px;width:1.2px;height:20px;background:#3f3f3f"></div>
<div class="t" style="left:986.64px;top:157px;width:60.64px;text-align:center;font-size:11px;font-weight:bold;color:#f0f0f0"><span style="display:inline-block;transform:scaleX(0.83)">V</span></div>
<div class="a" style="left:1046.68px;top:152px;width:1.2px;height:20px;background:#3f3f3f"></div>
<div class="t" style="left:1047.28px;top:157px;width:60.64px;text-align:center;font-size:11px;font-weight:bold;color:#f0f0f0"><span style="display:inline-block;transform:scaleX(0.83)">W</span></div>
<div class="a" style="left:1107.32px;top:152px;width:1.2px;height:20px;background:#3f3f3f"></div>
<div class="t" style="left:1107.92px;top:157px;width:60.64px;text-align:center;font-size:11px;font-weight:bold;color:#f0f0f0"><span style="display:inline-block;transform:scaleX(0.83)">X</span></div>
<div class="a" style="left:1167.96px;top:152px;width:1.2px;height:20px;background:#3f3f3f"></div>
<div class="t" style="left:1168.56px;top:157px;width:60.64px;text-align:center;font-size:11px;font-weight:bold;color:#f0f0f0"><span style="display:inline-block;transform:scaleX(0.83)">Y</span></div>
<div class="a" style="left:1228.60px;top:152px;width:1.2px;height:20px;background:#3f3f3f"></div>
<div class="t" style="left:1229.20px;top:157px;width:60.64px;text-align:center;font-size:11px;font-weight:bold;color:#f0f0f0"><span style="display:inline-block;transform:scaleX(0.83)">Z</span></div>
<div class="a" style="left:1289.24px;top:152px;width:1.2px;height:20px;background:#3f3f3f"></div>
<div class="t" style="left:1289.84px;top:157px;width:60.64px;text-align:center;font-size:11px;font-weight:bold;color:#f0f0f0"><span style="display:inline-block;transform:scaleX(0.83)">AA</span></div>
<div class="a" style="left:1349.88px;top:152px;width:1.2px;height:20px;background:#3f3f3f"></div>
<div class="t" style="left:1350.48px;top:157px;width:60.64px;text-align:center;font-size:11px;font-weight:bold;color:#f0f0f0"><span style="display:inline-block;transform:scaleX(0.83)">AB</span></div>
<div class="a" style="left:1410.52px;top:152px;width:1.2px;height:20px;background:#3f3f3f"></div>
<div class="t" style="left:1411.12px;top:157px;width:60.64px;text-align:center;font-size:11px;font-weight:bold;color:#f0f0f0"><span style="display:inline-block;transform:scaleX(0.83)">AC</span></div>
<div class="a" style="left:1471.16px;top:152px;width:1.2px;height:20px;background:#3f3f3f"></div>
<div class="t" style="left:1471.76px;top:157px;width:60.64px;text-align:center;font-size:11px;font-weight:bold;color:#f0f0f0"><span style="display:inline-block;transform:scaleX(0.83)">AD</span></div>
<div class="a" style="left:1531.80px;top:152px;width:1.2px;height:20px;background:#3f3f3f"></div>
<div class="t" style="left:1532.40px;top:157px;width:60.64px;text-align:center;font-size:11px;font-weight:bold;color:#f0f0f0"><span style="display:inline-block;transform:scaleX(0.83)">AE</span></div>
<div class="a" style="left:1592.44px;top:152px;width:1.2px;height:20px;background:#3f3f3f"></div>
<div class="t" style="left:1593.04px;top:157px;width:60.64px;text-align:center;font-size:11px;font-weight:bold;color:#f0f0f0"><span style="display:inline-block;transform:scaleX(0.83)">AF</span></div>
<div class="a" style="left:1653.08px;top:152px;width:1.2px;height:20px;background:#3f3f3f"></div>
<div class="a" style="left:14.9px;top:152px;width:1.2px;height:20px;background:#3f3f3f"></div>
<div class="a" style="left:0;top:172px;width:1600px;height:712px;background:#ffffff"></div>
<div class="a" style="left:0;top:172px;width:14.8px;height:712px;background:#161616"></div>
<div class="a" style="left:0;top:186.42px;width:14.8px;height:1.2px;background:#3f3f3f"></div>
<div class="t" style="left:-6.2px;top:174.70px;width:20px;text-align:center;font-size:10.5px;font-weight:bold;color:#f0f0f0;letter-spacing:-0.6px">1</div>
<div class="a" style="left:0;top:201.35px;width:14.8px;height:1.2px;background:#3f3f3f"></div>
<div class="t" style="left:-6.2px;top:189.62px;width:20px;text-align:center;font-size:10.5px;font-weight:bold;color:#f0f0f0;letter-spacing:-0.6px">2</div>
<div class="a" style="left:0;top:216.27px;width:14.8px;height:1.2px;background:#3f3f3f"></div>
<div class="t" style="left:-6.2px;top:204.55px;width:20px;text-align:center;font-size:10.5px;font-weight:bold;color:#f0f0f0;letter-spacing:-0.6px">3</div>
<div class="a" style="left:0;top:231.19px;width:14.8px;height:1.2px;background:#3f3f3f"></div>
<div class="t" style="left:-6.2px;top:219.47px;width:20px;text-align:center;font-size:10.5px;font-weight:bold;color:#f0f0f0;letter-spacing:-0.6px">4</div>
<div class="a" style="left:0;top:246.12px;width:14.8px;height:1.2px;background:#3f3f3f"></div>
<div class="t" style="left:-6.2px;top:234.39px;width:20px;text-align:center;font-size:10.5px;font-weight:bold;color:#f0f0f0;letter-spacing:-0.6px">5</div>
<div class="a" style="left:0;top:261.04px;width:14.8px;height:1.2px;background:#3f3f3f"></div>
<div class="t" style="left:-6.2px;top:249.31px;width:20px;text-align:center;font-size:10.5px;font-weight:bold;color:#f0f0f0;letter-spacing:-0.6px">6</div>
<div class="a" style="left:0;top:275.96px;width:14.8px;height:1.2px;background:#3f3f3f"></div>
<div class="t" style="left:-6.2px;top:264.24px;width:20px;text-align:center;font-size:10.5px;font-weight:bold;color:#f0f0f0;letter-spacing:-0.6px">7</div>
<div class="a" style="left:0;top:290.88px;width:14.8px;height:1.2px;background:#3f3f3f"></div>
<div class="t" style="left:-6.2px;top:279.16px;width:20px;text-align:center;font-size:10.5px;font-weight:bold;color:#f0f0f0;letter-spacing:-0.6px">8</div>
<div class="a" style="left:0;top:305.81px;width:14.8px;height:1.2px;background:#3f3f3f"></div>
<div class="t" style="left:-6.2px;top:294.08px;width:20px;text-align:center;font-size:10.5px;font-weight:bold;color:#f0f0f0;letter-spacing:-0.6px">9</div>
<div class="a" style="left:0;top:320.73px;width:14.8px;height:1.2px;background:#3f3f3f"></div>
<div class="t" style="left:-6.2px;top:309.01px;width:20px;text-align:center;font-size:10.5px;font-weight:bold;color:#f0f0f0;letter-spacing:-0.6px">10</div>
<div class="a" style="left:0;top:335.65px;width:14.8px;height:1.2px;background:#3f3f3f"></div>
<div class="t" style="left:-6.2px;top:323.93px;width:20px;text-align:center;font-size:10.5px;font-weight:bold;color:#f0f0f0;letter-spacing:-0.6px">11</div>
<div class="a" style="left:0;top:350.58px;width:14.8px;height:1.2px;background:#3f3f3f"></div>
<div class="t" style="left:-6.2px;top:338.85px;width:20px;text-align:center;font-size:10.5px;font-weight:bold;color:#f0f0f0;letter-spacing:-0.6px">12</div>
<div class="a" style="left:0;top:365.50px;width:14.8px;height:1.2px;background:#3f3f3f"></div>
<div class="t" style="left:-6.2px;top:353.78px;width:20px;text-align:center;font-size:10.5px;font-weight:bold;color:#f0f0f0;letter-spacing:-0.6px">13</div>
<div class="a" style="left:0;top:380.42px;width:14.8px;height:1.2px;background:#3f3f3f"></div>
<div class="t" style="left:-6.2px;top:368.70px;width:20px;text-align:center;font-size:10.5px;font-weight:bold;color:#f0f0f0;letter-spacing:-0.6px">14</div>
<div class="a" style="left:0;top:395.34px;width:14.8px;height:1.2px;background:#3f3f3f"></div>
<div class="t" style="left:-6.2px;top:383.62px;width:20px;text-align:center;font-size:10.5px;font-weight:bold;color:#f0f0f0;letter-spacing:-0.6px">15</div>
<div class="a" style="left:0;top:410.27px;width:14.8px;height:1.2px;background:#3f3f3f"></div>
<div class="t" style="left:-6.2px;top:398.55px;width:20px;text-align:center;font-size:10.5px;font-weight:bold;color:#f0f0f0;letter-spacing:-0.6px">16</div>
<div class="a" style="left:0;top:425.19px;width:14.8px;height:1.2px;background:#3f3f3f"></div>
<div class="t" style="left:-6.2px;top:413.47px;width:20px;text-align:center;font-size:10.5px;font-weight:bold;color:#f0f0f0;letter-spacing:-0.6px">17</div>
<div class="a" style="left:0;top:440.11px;width:14.8px;height:1.2px;background:#3f3f3f"></div>
<div class="t" style="left:-6.2px;top:428.39px;width:20px;text-align:center;font-size:10.5px;font-weight:bold;color:#f0f0f0;letter-spacing:-0.6px">18</div>
<div class="a" style="left:0;top:455.04px;width:14.8px;height:1.2px;background:#3f3f3f"></div>
<div class="t" style="left:-6.2px;top:443.31px;width:20px;text-align:center;font-size:10.5px;font-weight:bold;color:#f0f0f0;letter-spacing:-0.6px">19</div>
<div class="a" style="left:0;top:469.96px;width:14.8px;height:1.2px;background:#3f3f3f"></div>
<div class="t" style="left:-6.2px;top:458.24px;width:20px;text-align:center;font-size:10.5px;font-weight:bold;color:#f0f0f0;letter-spacing:-0.6px">20</div>
<div class="a" style="left:0;top:484.88px;width:14.8px;height:1.2px;background:#3f3f3f"></div>
<div class="t" style="left:-6.2px;top:473.16px;width:20px;text-align:center;font-size:10.5px;font-weight:bold;color:#f0f0f0;letter-spacing:-0.6px">21</div>
<div class="a" style="left:0;top:499.81px;width:14.8px;height:1.2px;background:#3f3f3f"></div>
<div class="t" style="left:-6.2px;top:488.08px;width:20px;text-align:center;font-size:10.5px;font-weight:bold;color:#f0f0f0;letter-spacing:-0.6px">22</div>
<div class="a" style="left:0;top:514.73px;width:14.8px;height:1.2px;background:#3f3f3f"></div>
<div class="t" style="left:-6.2px;top:503.01px;width:20px;text-align:center;font-size:10.5px;font-weight:bold;color:#f0f0f0;letter-spacing:-0.6px">23</div>
<div class="a" style="left:0;top:529.65px;width:14.8px;height:1.2px;background:#3f3f3f"></div>
<div class="t" style="left:-6.2px;top:517.93px;width:20px;text-align:center;font-size:10.5px;font-weight:bold;color:#f0f0f0;letter-spacing:-0.6px">24</div>
<div class="a" style="left:0;top:544.57px;width:14.8px;height:1.2px;background:#3f3f3f"></div>
<div class="t" style="left:-6.2px;top:532.85px;width:20px;text-align:center;font-size:10.5px;font-weight:bold;color:#f0f0f0;letter-spacing:-0.6px">25</div>
<div class="a" style="left:0;top:559.50px;width:14.8px;height:1.2px;background:#3f3f3f"></div>
<div class="t" style="left:-6.2px;top:547.77px;width:20px;text-align:center;font-size:10.5px;font-weight:bold;color:#f0f0f0;letter-spacing:-0.6px">26</div>
<div class="a" style="left:0;top:574.42px;width:14.8px;height:1.2px;background:#3f3f3f"></div>
<div class="t" style="left:-6.2px;top:562.70px;width:20px;text-align:center;font-size:10.5px;font-weight:bold;color:#f0f0f0;letter-spacing:-0.6px">27</div>
<div class="a" style="left:0;top:589.34px;width:14.8px;height:1.2px;background:#3f3f3f"></div>
<div class="a" style="left:0;top:575.62px;width:14.8px;height:13.72px;background:#505050"></div>
<div class="a" style="left:14px;top:575.62px;width:2px;height:13.72px;background:#1e7d45"></div>
<div class="t" style="left:-6.2px;top:577.62px;width:20px;text-align:center;font-size:10.5px;font-weight:bold;color:#f0f0f0;letter-spacing:-0.6px">28</div>
<div class="a" style="left:0;top:604.27px;width:14.8px;height:1.2px;background:#3f3f3f"></div>
<div class="t" style="left:-6.2px;top:592.54px;width:20px;text-align:center;font-size:10.5px;font-weight:bold;color:#f0f0f0;letter-spacing:-0.6px">29</div>
<div class="a" style="left:0;top:619.19px;width:14.8px;height:1.2px;background:#3f3f3f"></div>
<div class="t" style="left:-6.2px;top:607.47px;width:20px;text-align:center;font-size:10.5px;font-weight:bold;color:#f0f0f0;letter-spacing:-0.6px">30</div>
<div class="a" style="left:0;top:634.11px;width:14.8px;height:1.2px;background:#3f3f3f"></div>
<div class="t" style="left:-6.2px;top:622.39px;width:20px;text-align:center;font-size:10.5px;font-weight:bold;color:#f0f0f0;letter-spacing:-0.6px">31</div>
<div class="a" style="left:0;top:649.04px;width:14.8px;height:1.2px;background:#3f3f3f"></div>
<div class="t" style="left:-6.2px;top:637.31px;width:20px;text-align:center;font-size:10.5px;font-weight:bold;color:#f0f0f0;letter-spacing:-0.6px">32</div>
<div class="a" style="left:0;top:663.96px;width:14.8px;height:1.2px;background:#3f3f3f"></div>
<div class="t" style="left:-6.2px;top:652.24px;width:20px;text-align:center;font-size:10.5px;font-weight:bold;color:#f0f0f0;letter-spacing:-0.6px">33</div>
<div class="a" style="left:0;top:678.88px;width:14.8px;height:1.2px;background:#3f3f3f"></div>
<div class="t" style="left:-6.2px;top:667.16px;width:20px;text-align:center;font-size:10.5px;font-weight:bold;color:#f0f0f0;letter-spacing:-0.6px">34</div>
<div class="a" style="left:0;top:693.80px;width:14.8px;height:1.2px;background:#3f3f3f"></div>
<div class="t" style="left:-6.2px;top:682.08px;width:20px;text-align:center;font-size:10.5px;font-weight:bold;color:#f0f0f0;letter-spacing:-0.6px">35</div>
<div class="a" style="left:0;top:708.73px;width:14.8px;height:1.2px;background:#3f3f3f"></div>
<div class="t" style="left:-6.2px;top:697.00px;width:20px;text-align:center;font-size:10.5px;font-weight:bold;color:#f0f0f0;letter-spacing:-0.6px">36</div>
<div class="a" style="left:0;top:723.65px;width:14.8px;height:1.2px;background:#3f3f3f"></div>
<div class="t" style="left:-6.2px;top:711.93px;width:20px;text-align:center;font-size:10.5px;font-weight:bold;color:#f0f0f0;letter-spacing:-0.6px">37</div>
<div class="a" style="left:0;top:738.57px;width:14.8px;height:1.2px;background:#3f3f3f"></div>
<div class="t" style="left:-6.2px;top:726.85px;width:20px;text-align:center;font-size:10.5px;font-weight:bold;color:#f0f0f0;letter-spacing:-0.6px">38</div>
<div class="a" style="left:0;top:753.50px;width:14.8px;height:1.2px;background:#3f3f3f"></div>
<div class="t" style="left:-6.2px;top:741.77px;width:20px;text-align:center;font-size:10.5px;font-weight:bold;color:#f0f0f0;letter-spacing:-0.6px">39</div>
<div class="a" style="left:0;top:768.42px;width:14.8px;height:1.2px;background:#3f3f3f"></div>
<div class="t" style="left:-6.2px;top:756.70px;width:20px;text-align:center;font-size:10.5px;font-weight:bold;color:#f0f0f0;letter-spacing:-0.6px">40</div>
<div class="a" style="left:0;top:783.34px;width:14.8px;height:1.2px;background:#3f3f3f"></div>
<div class="t" style="left:-6.2px;top:771.62px;width:20px;text-align:center;font-size:10.5px;font-weight:bold;color:#f0f0f0;letter-spacing:-0.6px">41</div>
<div class="a" style="left:0;top:798.27px;width:14.8px;height:1.2px;background:#3f3f3f"></div>
<div class="t" style="left:-6.2px;top:786.54px;width:20px;text-align:center;font-size:10.5px;font-weight:bold;color:#f0f0f0;letter-spacing:-0.6px">42</div>
<div class="a" style="left:0;top:813.19px;width:14.8px;height:1.2px;background:#3f3f3f"></div>
<div class="t" style="left:-6.2px;top:801.47px;width:20px;text-align:center;font-size:10.5px;font-weight:bold;color:#f0f0f0;letter-spacing:-0.6px">43</div>
<div class="a" style="left:0;top:828.11px;width:14.8px;height:1.2px;background:#3f3f3f"></div>
<div class="t" style="left:-6.2px;top:816.39px;width:20px;text-align:center;font-size:10.5px;font-weight:bold;color:#f0f0f0;letter-spacing:-0.6px">44</div>
<div class="a" style="left:0;top:843.03px;width:14.8px;height:1.2px;background:#3f3f3f"></div>
<div class="t" style="left:-6.2px;top:831.31px;width:20px;text-align:center;font-size:10.5px;font-weight:bold;color:#f0f0f0;letter-spacing:-0.6px">45</div>
<div class="a" style="left:0;top:857.96px;width:14.8px;height:1.2px;background:#3f3f3f"></div>
<div class="t" style="left:-6.2px;top:846.24px;width:20px;text-align:center;font-size:10.5px;font-weight:bold;color:#f0f0f0;letter-spacing:-0.6px">46</div>
<div class="a" style="left:0;top:872.88px;width:14.8px;height:1.2px;background:#3f3f3f"></div>
<div class="t" style="left:-6.2px;top:861.16px;width:20px;text-align:center;font-size:10.5px;font-weight:bold;color:#f0f0f0;letter-spacing:-0.6px">47</div>
<div class="a" style="left:0;top:887.80px;width:14.8px;height:1.2px;background:#3f3f3f"></div>
<div class="t" style="left:-6.2px;top:876.08px;width:20px;text-align:center;font-size:10.5px;font-weight:bold;color:#f0f0f0;letter-spacing:-0.6px">48</div>
<div class="a" style="left:15px;top:172px;width:1.3px;height:712px;background:#e0e0e0"></div>
<div class="a" style="left:14px;top:575.62px;width:2px;height:13.72px;background:#1e7d45"></div>
<svg style="left:0;top:0" width="1600" height="930"><path d="M16,187.02H1600M16,201.95H1600M16,216.87H1600M16,231.79H1600M16,246.71H1600M16,261.64H1600M16,276.56H1600M16,291.48H1600M16,306.41H1600M16,321.33H1600M16,336.25H1600M16,351.18H1600M16,366.10H1600M16,381.02H1600M16,395.94H1600M16,410.87H1600M16,425.79H1600M16,440.71H1600M16,455.64H1600M16,470.56H1600M16,485.48H1600M16,500.41H1600M16,515.33H1600M16,530.25H1600M16,545.17H1600M16,560.10H1600M16,575.02H1600M16,589.94H1600M16,604.87H1600M16,619.79H1600M16,634.71H1600M16,649.64H1600M16,664.56H1600M16,679.48H1600M16,694.40H1600M16,709.33H1600M16,724.25H1600M16,739.17H1600M16,754.10H1600M16,769.02H1600M16,783.94H1600M16,798.87H1600M16,813.79H1600M16,828.71H1600M16,843.63H1600M16,858.56H1600M16,873.48H1600M16,888.40H1600M77.04,172V884M137.68,172V884M198.32,172V884M258.96,172V884M319.60,172V884M380.24,172V884M440.88,172V884M501.52,172V884M562.16,172V884M622.80,172V884M683.44,172V884M744.08,172V884M804.72,172V884M865.36,172V884M926.00,172V884M986.64,172V884M1047.28,172V884M1107.92,172V884M1168.56,172V884M1229.20,172V884M1289.84,172V884M1350.48,172V884M1411.12,172V884M1471.76,172V884M1532.40,172V884M1593.04,172V884M1653.68,172V884" stroke="#dcdcdc" stroke-width="1.15" fill="none"/></svg>
<svg style="left:0;top:152px" width="15" height="20"><polygon points="13.2,3 13.2,18.2 1,18.2" fill="#5a5a5a"/></svg>
<div class="a" style="left:379.3px;top:573.5px;width:62.4px;height:17.5px;border:2px solid #0f6a25"></div>
<div class="a" style="left:437.2px;top:586.6px;width:6.4px;height:6.4px;background:#1d7a3c;border:1px solid #fff"></div>
<svg style="left:0;top:0" width="1600" height="930">
<defs><linearGradient id="lg" gradientUnits="userSpaceOnUse" x1="153" y1="0" x2="897" y2="0"><stop offset="0" stop-color="#142f66"/><stop offset="0.06" stop-color="#0f4a80"/><stop offset="0.19" stop-color="#166c9c"/><stop offset="0.31" stop-color="#4a82a8"/><stop offset="0.5" stop-color="#82a2bc"/><stop offset="0.56" stop-color="#6a92b2"/><stop offset="0.69" stop-color="#2a6a98"/><stop offset="0.81" stop-color="#1a5588"/><stop offset="0.94" stop-color="#153e72"/><stop offset="1" stop-color="#12336a"/></linearGradient></defs>
<line x1="153" y1="479.6" x2="898" y2="478.4" stroke="url(#lg)" stroke-width="1.3"/>
<ellipse cx="1020.5" cy="479" rx="123.6" ry="70" fill="#7f7f7f" stroke="#172b40" stroke-width="1.4"/>
</svg>
<div class="a" style="left:271.2px;top:872px;width:1280px;height:8.6px;border-radius:4.3px;background:rgba(190,190,190,0.78)"></div>
<div class="a" style="left:0;top:884px;width:1600px;height:24px;background:#323232"></div>
<div class="a" style="left:51px;top:883.8px;width:73.5px;height:20.8px;background:#ffffff;border-radius:0 0 3px 3px"></div>
<svg style="left:0;top:0" width="1600" height="930">
<polygon points="15,892.5 15,901.5 8.4,897" fill="#5e5e5e"/>
<polygon points="29.4,892.5 29.4,901.5 36,897" fill="#5e5e5e"/>
<path d="M142.9,891.8 V900.8 M138.2,896.3 H147.6" stroke="#d6d6d6" stroke-width="1.6"/>
<rect x="159.4" y="885" width="1" height="13" fill="#4a4a4a"/>
</svg>
<div class="a" style="left:0;top:907.6px;width:1600px;height:1.6px;background:#1c1c1c"></div>
<div class="a" style="left:0;top:909.2px;width:1600px;height:20.8px;background:linear-gradient(#464646,#3a3a3a)"></div>
<div class="a" style="left:1308.8px;top:909.2px;width:34.2px;height:20.8px;background:linear-gradient(#4a4a4a,#3e3e3e)"></div>
<svg style="left:0;top:0" width="1600" height="930">
<g fill="none" stroke="#e2e2e2" stroke-width="1.2" stroke-linecap="round">
<circle cx="74.3" cy="914.6" r="1.9"/>
<path d="M68.8,915.4 C68.6,917.6 71.4,918.4 74.3,917.4 C77.2,918.4 80,917.6 79.8,915.4"/>
<path d="M72.6,917.9 C72.4,920.4 71.8,922.6 71,924.6 C71.4,925.6 72.6,925.2 73.6,923.2"/>
<path d="M75.8,919.8 L81.6,925.8 M81.6,919.8 L75.8,925.8"/>
</g>
<g fill="none" stroke="#d6d6d6" stroke-width="1.1">
<rect x="1320.6" y="913" width="11.4" height="11.6"/>
<path d="M1324.4,913 V924.6 M1328.2,913 V924.6 M1320.6,916.9 H1332 M1320.6,920.8 H1332"/>
<rect x="1353" y="913" width="13.6" height="11.6"/>
<rect x="1355.6" y="915.4" width="8.4" height="6.8"/>
<path d="M1357.6,917.6 H1362 M1357.6,920 H1362"/>
<path d="M1386.2,913 H1399.2 V924.6 H1386.2 Z M1389.6,913 V919.6 H1395.8 V913"/>
</g>
<path d="M1416.4,919.2 H1424.8" stroke="#d6d6d6" stroke-width="1.6"/>
<rect x="1431.2" y="917.5" width="93" height="3.8" rx="1.9" fill="#6a6a6a"/>
<circle cx="1477.6" cy="919.2" r="7.4" fill="#a0a0a0"/>
<path d="M1530.6,919.2 H1538.8 M1534.7,915.1 V923.3" stroke="#d6d6d6" stroke-width="1.6"/>
</svg>
<div class="t" style="left:79.34px;top:7.02px;font-size:11px;font-weight:bold;color:#d8d8d8;transform:scaleX(0.9336)">AutoSave</div>
<div class="t" style="left:784.04px;top:6.79px;font-size:12.5px;font-weight:normal;color:#e8e8e8;transform:scaleX(0.8979);-webkit-text-stroke:0.25px #e8e8e8">Book1</div>
<div class="t" style="left:1330.77px;top:7.43px;font-size:12px;font-weight:normal;color:#bcbcbc;transform:scaleX(1.0211);-webkit-text-stroke:0.25px #bcbcbc">Search (Cmd + Ctrl + U)</div>
<div class="t" style="left:3.46px;top:34.63px;font-size:12px;font-weight:bold;color:#e4e4e4;transform:scaleX(1.1096)">Home</div>
<div class="t" style="left:60.62px;top:34.69px;font-size:12px;font-weight:normal;color:#e4e4e4;transform:scaleX(1.1477);-webkit-text-stroke:0.3px #e4e4e4">Insert</div>
<div class="t" style="left:117.60px;top:34.69px;font-size:12px;font-weight:normal;color:#e4e4e4;transform:scaleX(1.0934);-webkit-text-stroke:0.3px #e4e4e4">Draw</div>
<div class="t" style="left:170.39px;top:34.69px;font-size:12px;font-weight:normal;color:#e4e4e4;transform:scaleX(1.0579);-webkit-text-stroke:0.3px #e4e4e4">Page Layout</div>
<div class="t" style="left:265.37px;top:34.69px;font-size:12px;font-weight:normal;color:#e4e4e4;transform:scaleX(1.0776);-webkit-text-stroke:0.3px #e4e4e4">Formulas</div>
<div class="t" style="left:342.64px;top:34.69px;font-size:12px;font-weight:normal;color:#e4e4e4;transform:scaleX(1.0578);-webkit-text-stroke:0.3px #e4e4e4">Data</div>
<div class="t" style="left:391.40px;top:34.69px;font-size:12px;font-weight:normal;color:#e4e4e4;transform:scaleX(1.0438);-webkit-text-stroke:0.3px #e4e4e4">Review</div>
<div class="t" style="left:455.64px;top:34.69px;font-size:12px;font-weight:normal;color:#e4e4e4;transform:scaleX(1.0720);-webkit-text-stroke:0.3px #e4e4e4">View</div>
<div class="t" style="left:506.75px;top:34.69px;font-size:12px;font-weight:normal;color:#e4e4e4;transform:scaleX(1.0905);-webkit-text-stroke:0.3px #e4e4e4">Automate</div>
<div class="t" style="left:1439.24px;top:36.57px;font-size:12.5px;font-weight:normal;color:#f2f2f2;transform:scaleX(1.0005);-webkit-text-stroke:0.3px #f2f2f2">Comments</div>
<div class="t" style="left:1543.22px;top:36.57px;font-size:12.5px;font-weight:normal;color:#f6f6f6;transform:scaleX(0.9983);-webkit-text-stroke:0.3px #f6f6f6">Share</div>
<div class="t" style="left:13.23px;top:95.61px;font-size:10.5px;font-weight:normal;color:#e2e2e2;transform:scaleX(0.9663);-webkit-text-stroke:0.3px #e2e2e2">Paste</div>
<div class="t" style="left:73.55px;top:63.71px;font-size:10.5px;font-weight:normal;color:#e2e2e2;transform:scaleX(0.9697);-webkit-text-stroke:0.3px #e2e2e2">Cut</div>
<div class="t" style="left:73.55px;top:84.01px;font-size:10.5px;font-weight:normal;color:#e2e2e2;transform:scaleX(0.9562);-webkit-text-stroke:0.3px #e2e2e2">Copy</div>
<div class="t" style="left:73.31px;top:105.01px;font-size:10.5px;font-weight:normal;color:#e2e2e2;transform:scaleX(0.9915);-webkit-text-stroke:0.3px #e2e2e2">Format</div>
<div class="t" style="left:138.24px;top:68.81px;font-size:10.5px;font-weight:normal;color:#e8e8e8;transform:scaleX(1.1178);-webkit-text-stroke:0.3px #e8e8e8">Aptos Narrow (Bod...</div>
<div class="t" style="left:271.20px;top:69.30px;font-size:11px;font-weight:normal;color:#e8e8e8;transform:scaleX(1.0168);-webkit-text-stroke:0.3px #e8e8e8">12</div>
<div class="t" style="left:139.22px;top:98.22px;font-size:12.5px;font-weight:bold;color:#cfcfcf;transform:scaleX(0.9420)">B</div>
<div class="t" style="left:557.67px;top:69.31px;font-size:10.5px;font-weight:normal;color:#e2e2e2;transform:scaleX(1.0008);-webkit-text-stroke:0.3px #e2e2e2">Wrap Text</div>
<div class="t" style="left:557.20px;top:99.11px;font-size:10.5px;font-weight:normal;color:#e2e2e2;transform:scaleX(1.0090);-webkit-text-stroke:0.3px #e2e2e2">Merge &amp; Centre</div>
<div class="t" style="left:670.01px;top:68.90px;font-size:11px;font-weight:normal;color:#e8e8e8;transform:scaleX(1.0524);-webkit-text-stroke:0.3px #e8e8e8">General</div>
<div class="t" style="left:830.83px;top:95.61px;font-size:10.5px;font-weight:normal;color:#e2e2e2;transform:scaleX(1.0093);-webkit-text-stroke:0.3px #e2e2e2">Conditional</div>
<div class="t" style="left:831.09px;top:107.01px;font-size:10.5px;font-weight:normal;color:#e2e2e2;transform:scaleX(1.0281);-webkit-text-stroke:0.3px #e2e2e2">Formatting</div>
<div class="t" style="left:893.31px;top:95.61px;font-size:10.5px;font-weight:normal;color:#e2e2e2;transform:scaleX(1.0007);-webkit-text-stroke:0.3px #e2e2e2">Format</div>
<div class="t" style="left:890.87px;top:107.01px;font-size:10.5px;font-weight:normal;color:#e2e2e2;transform:scaleX(0.9834);-webkit-text-stroke:0.3px #e2e2e2">as Table</div>
<div class="t" style="left:947.13px;top:95.61px;font-size:10.5px;font-weight:normal;color:#e2e2e2;transform:scaleX(1.0101);-webkit-text-stroke:0.3px #e2e2e2">Cell</div>
<div class="t" style="left:942.27px;top:107.01px;font-size:10.5px;font-weight:normal;color:#e2e2e2;transform:scaleX(1.0069);-webkit-text-stroke:0.3px #e2e2e2">Styles</div>
<div class="t" style="left:1006.67px;top:95.61px;font-size:10.5px;font-weight:normal;color:#e2e2e2;transform:scaleX(1.0287);-webkit-text-stroke:0.3px #e2e2e2">Insert</div>
<div class="t" style="left:1052.42px;top:95.61px;font-size:10.5px;font-weight:normal;color:#e2e2e2;transform:scaleX(0.9785);-webkit-text-stroke:0.3px #e2e2e2">Delete</div>
<div class="t" style="left:1097.62px;top:95.61px;font-size:10.5px;font-weight:normal;color:#e2e2e2;transform:scaleX(0.9854);-webkit-text-stroke:0.3px #e2e2e2">Format</div>
<div class="t" style="left:1180.45px;top:63.61px;font-size:10.5px;font-weight:normal;color:#e2e2e2;transform:scaleX(1.0112);-webkit-text-stroke:0.3px #e2e2e2">Auto-sum</div>
<div class="t" style="left:1180.00px;top:84.21px;font-size:10.5px;font-weight:normal;color:#e2e2e2;transform:scaleX(1.0203);-webkit-text-stroke:0.3px #e2e2e2">Fill</div>
<div class="t" style="left:1180.25px;top:104.91px;font-size:10.5px;font-weight:normal;color:#e2e2e2;transform:scaleX(0.9709);-webkit-text-stroke:0.3px #e2e2e2">Clear</div>
<div class="t" style="left:1249.58px;top:95.61px;font-size:10.5px;font-weight:normal;color:#e2e2e2;transform:scaleX(0.9907);-webkit-text-stroke:0.3px #e2e2e2">Sort &amp;</div>
<div class="t" style="left:1251.88px;top:107.01px;font-size:10.5px;font-weight:normal;color:#e2e2e2;transform:scaleX(1.0412);-webkit-text-stroke:0.3px #e2e2e2">Filter</div>
<div class="t" style="left:1295.02px;top:95.61px;font-size:10.5px;font-weight:normal;color:#e2e2e2;transform:scaleX(0.9832);-webkit-text-stroke:0.3px #e2e2e2">Find &amp;</div>
<div class="t" style="left:1295.17px;top:107.01px;font-size:10.5px;font-weight:normal;color:#e2e2e2;transform:scaleX(1.0122);-webkit-text-stroke:0.3px #e2e2e2">Select</div>
<div class="t" style="left:1354.57px;top:95.61px;font-size:10.5px;font-weight:normal;color:#8a8a8a;transform:scaleX(1.0230);-webkit-text-stroke:0.3px #8a8a8a">Sensitivity</div>
<div class="t" style="left:1427.35px;top:95.61px;font-size:10.5px;font-weight:normal;color:#e2e2e2;transform:scaleX(1.0287);-webkit-text-stroke:0.3px #e2e2e2">Add-ins</div>
<div class="t" style="left:1487.36px;top:95.61px;font-size:10.5px;font-weight:normal;color:#e2e2e2;transform:scaleX(0.9870);-webkit-text-stroke:0.3px #e2e2e2">Analyse</div>
<div class="t" style="left:1494.42px;top:107.01px;font-size:10.5px;font-weight:normal;color:#e2e2e2;transform:scaleX(0.9743);-webkit-text-stroke:0.3px #e2e2e2">Data</div>
<div class="t" style="left:2.68px;top:131.01px;font-size:12.5px;font-weight:normal;color:#e6e6e6;transform:scaleX(0.9735);-webkit-text-stroke:0.2px #e6e6e6">L28</div>
<div class="t" style="left:956.85px;top:439.70px;font-size:34.5px;font-weight:normal;color:#ffffff;transform:scaleX(0.9827);-webkit-text-stroke:0.45px #ffffff">Problem</div>
<div class="t" style="left:943.50px;top:484.20px;font-size:34.5px;font-weight:normal;color:#ffffff;transform:scaleX(1.0051);-webkit-text-stroke:0.45px #ffffff">statement</div>
<div class="t" style="left:68.82px;top:891.03px;font-size:11.5px;font-weight:bold;color:#1f8a48;transform:scaleX(0.9655)">Sheet1</div>
<div class="t" style="left:16.43px;top:914.38px;font-size:11.5px;font-weight:normal;color:#e0e0e0;transform:scaleX(1.0067);-webkit-text-stroke:0.2px #e0e0e0">Ready</div>
<div class="t" style="left:85.30px;top:914.38px;font-size:11.5px;font-weight:normal;color:#e0e0e0;transform:scaleX(1.0404);-webkit-text-stroke:0.2px #e0e0e0">Accessibility: Investigate</div>
<div class="t" style="left:1553.27px;top:914.88px;font-size:11.5px;font-weight:normal;color:#e0e0e0;transform:scaleX(1.0587);-webkit-text-stroke:0.2px #e0e0e0">100%</div>
</body></html>
